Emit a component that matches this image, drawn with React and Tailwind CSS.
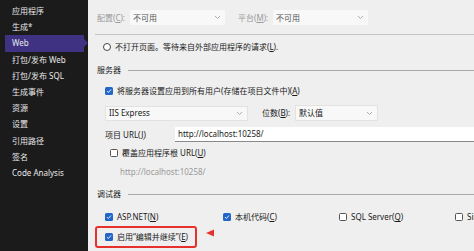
import React from 'react'

const navItems = ['应用程序', '生成*', 'Web', '打包/发布 Web', '打包/发布 SQL', '生成事件', '资源', '设置', '引用路径', '签名', 'Code Analysis']

const font = { fontFamily: '"Noto Sans", "Noto Sans CJK SC", sans-serif' }

function Chevron() {
  return (
    <svg width="7" height="5" viewBox="0 0 7 5" className="shrink-0">
      <path d="M1 1 L3.5 3.5 L6 1" fill="none" stroke="#9a9a9a" strokeWidth="0.8" />
    </svg>
  )
}

function Select({ value, className, muted }) {
  return (
    <div className={`flex items-center justify-between px-[3px] pr-[4px] ${className}`}>
      <span className={muted ? 'text-[#555]' : 'text-[#1a1a1a]'}>{value}</span>
      <Chevron />
    </div>
  )
}

function Check({ checked, label }) {
  return (
    <div className="flex items-center gap-[4px] h-[12px]">
      {checked ? (
        <span className="w-[8px] h-[8px] rounded-[1.5px] bg-[#2266c8] flex items-center justify-center">
          <svg width="6" height="6" viewBox="0 0 6 6">
            <path d="M1 3.1 L2.4 4.5 L5 1.5" fill="none" stroke="#fff" strokeWidth="0.9" />
          </svg>
        </span>
      ) : (
        <span className="w-[8px] h-[8px] rounded-[1.5px] border border-[#555] bg-white" />
      )}
      <span className="text-[#1a1a1a] whitespace-nowrap">{label}</span>
    </div>
  )
}

function Section({ title }) {
  return (
    <div className="flex items-center h-[12px] gap-[7px]">
      <span className="text-[#1a1a1a]">{title}</span>
      <div className="flex-1 h-px bg-[#a8a8a8]" />
    </div>
  )
}

export default function App() {
  return (
    <div className="w-[474px] h-[251px] flex overflow-hidden text-[8px] leading-none relative" style={font}>
      <aside className="w-[88px] shrink-0 bg-[#1b1b1c] pt-[3px] pl-[5px]">
        {navItems.map((item) => (
          <div key={item} className="relative h-[16.2px] flex items-center">
            {item === 'Web' ? (
              <div className="absolute inset-y-0 left-0 w-[79px] bg-[#3f3282]">
                <div className="absolute right-[-4px] top-1/2 -translate-y-1/2 w-0 h-0 border-y-[4px] border-y-transparent border-l-[4px] border-l-[#3f3282]" />
              </div>
            ) : null}
            <span className="relative pl-[7px] text-[#e8e8e8] whitespace-nowrap">{item}</span>
          </div>
        ))}
      </aside>

      <main className="flex-1 bg-[#efefef] pl-[9px] flex flex-col">
        <div className="mt-[10px] h-[15px] flex items-center">
          <span className="w-[33px] text-[#9a9a9a]">配置(<u>C</u>):</span>
          <Select value="不可用" muted className="w-[95px] h-[15px] bg-[#f8f8f8]" />
          <span className="ml-[13px] w-[35px] text-[#9a9a9a]">平台(<u>M</u>):</span>
          <Select value="不可用" muted className="w-[95px] h-[15px] bg-[#f8f8f8]" />
        </div>

        <div className="mt-[9px] h-px bg-[#c4c4c4] -ml-[2px]" />

        <div className="mt-[6px] h-[12px] flex items-center gap-[4px] pl-[6px]">
          <span className="w-[8px] h-[8px] rounded-full border border-[#444] bg-white" />
          <span className="text-[#1a1a1a]">不打开页面。等待来自外部应用程序的请求(<u>L</u>).</span>
        </div>

        <div className="mt-[11px]">
          <Section title="服务器" />
        </div>

        <div className="mt-[9px] pl-[8px]">
          <Check checked label={<>将服务器设置应用到所有用户(存储在项目文件中)(<u>A</u>)</>} />
        </div>

        <div className="mt-[8px] h-[16px] flex items-center pl-[8px]">
          <Select value="IIS Express" className="w-[143px] h-[15px] bg-[#f8f8f8] border border-[#e2e2e2]" />
          <span className="ml-[14px] w-[33px] text-[#1a1a1a]">位数(<u>B</u>):</span>
          <Select value="默认值" className="w-[83px] h-[16px] bg-[#f8f8f8] border border-[#e2e2e2]" />
        </div>

        <div className="mt-[6px] h-[15px] flex items-center pl-[8px]">
          <span className="w-[70px] text-[#1a1a1a]">项目 URL(<u>J</u>)</span>
          <div className="flex-1 h-[15px] bg-white border-b border-[#8a8a8a] flex items-center pl-[3px] mr-[2px]">
            <span className="text-[#1a1a1a]">http://localhost:10258/</span>
          </div>
        </div>

        <div className="mt-[5px] pl-[13px]">
          <Check label={<>覆盖应用程序根 URL(<u>U</u>)</>} />
        </div>

        <div className="mt-[7px] h-[12px] flex items-center pl-[23px]">
          <span className="text-[#9a9a9a]">http://localhost:10258/</span>
        </div>

        <div className="mt-[10px]">
          <Section title="调试器" />
        </div>

        <div className="mt-[11px] flex pl-[8px]">
          <div className="w-[118px]"><Check checked label={<>ASP.NET(<u>N</u>)</>} /></div>
          <div className="w-[116px]"><Check checked label={<>本机代码(<u>C</u>)</>} /></div>
          <div className="w-[116px]"><Check label={<>SQL Server(<u>Q</u>)</>} /></div>
          <div><Check label="Silverlight" /></div>
        </div>

        <div className="mt-[8px] pl-[8px]">
          <Check checked label={<>启用“编辑并继续”(<u>E</u>)</>} />
        </div>
      </main>

      <div className="absolute left-[95px] top-[226px] w-[102px] h-[22px] border-2 border-[#e5322d] rounded-[3px]" />
      <svg className="absolute left-[205px] top-[228px]" width="58" height="10" viewBox="0 0 58 10">
        <defs>
          <linearGradient id="arr" x1="0" x2="1">
            <stop offset="0" stopColor="#e5322d" />
            <stop offset="0.7" stopColor="#e5322d" />
            <stop offset="1" stopColor="#e5322d" stopOpacity="0.2" />
          </linearGradient>
        </defs>
        <path d="M8 5 L57 5" stroke="url(#arr)" strokeWidth="2" />
        <path d="M1 5 L9 1.5 L9 8.5 Z" fill="#e5322d" />
      </svg>
    </div>
  )
}
